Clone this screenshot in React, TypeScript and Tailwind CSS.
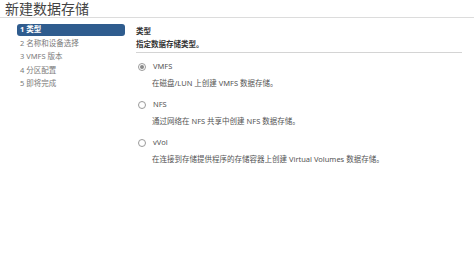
import React from 'react';

const steps = ['1 类型', '2 名称和设备选择', '3 VMFS 版本', '4 分区配置', '5 即将完成'];

const options = [
  { label: 'VMFS', desc: '在磁盘/LUN 上创建 VMFS 数据存储。', checked: true },
  { label: 'NFS', desc: '通过网络在 NFS 共享中创建 NFS 数据存储。', checked: false },
  { label: 'vVol', desc: '在连接到存储提供程序的存储容器上创建 Virtual Volumes 数据存储。', checked: false },
];

const font = { fontFamily: '"Noto Sans", "Noto Sans CJK SC", sans-serif' };

const Radio: React.FC<{ checked: boolean }> = ({ checked }) => (
  <span className="w-[8px] h-[8px] rounded-full border border-[#9a9a9a] bg-white flex items-center justify-center shrink-0">
    {checked && <span className="w-[4px] h-[4px] rounded-full bg-[#8a8a8a]" />}
  </span>
);

export default function App() {
  return (
    <div className="w-[474px] h-[261px] bg-white overflow-hidden" style={font}>
      {/* header */}
      <div className="h-[18px] border-b border-[#dcdcdc] pl-[5px] flex items-end">
        <h1 className="text-[14px] leading-[17px] text-[#444] font-normal">新建数据存储</h1>
      </div>

      <div className="flex">
        {/* steps */}
        <div className="w-[136px] pl-[17px] pr-[11px] pt-[6px] flex flex-col gap-[1.4px]">
          {steps.map((s, i) => (
            <div
              key={s}
              className={
                i === 0
                  ? 'h-[12px] rounded-[3px] bg-[#2f5c8e] text-white font-bold text-[7.5px] pl-[3px] flex items-center'
                  : 'h-[12px] text-[#7a7a7a] text-[7.5px] pl-[3px] flex items-center'
              }
            >
              {s}
            </div>
          ))}
        </div>

        {/* content */}
        <div className="flex-1 mr-[12px] pt-[8px]">
          <div className="border-b border-[#d4d4d4] pb-[2px]">
            <div className="h-[11px] flex items-center text-[7.5px] font-bold text-[#333]">类型</div>
            <div className="h-[11px] mt-[2px] flex items-center text-[7.5px] font-bold text-[#333]">指定数据存储类型。</div>
          </div>

          <div className="pt-[8px]">
            {options.map((o, i) => (
              <div key={o.label} className={i === 0 ? '' : 'mt-[9px]'}>
                <div className="h-[12px] pl-[2px] flex items-center">
                  <Radio checked={o.checked} />
                  <span className="ml-[7px] text-[7.5px] text-[#555]">{o.label}</span>
                </div>
                <div className="h-[12px] mt-[5px] pl-[16px] flex items-center text-[7.5px] text-[#555]">{o.desc}</div>
              </div>
            ))}
          </div>
        </div>
      </div>
    </div>
  );
}
